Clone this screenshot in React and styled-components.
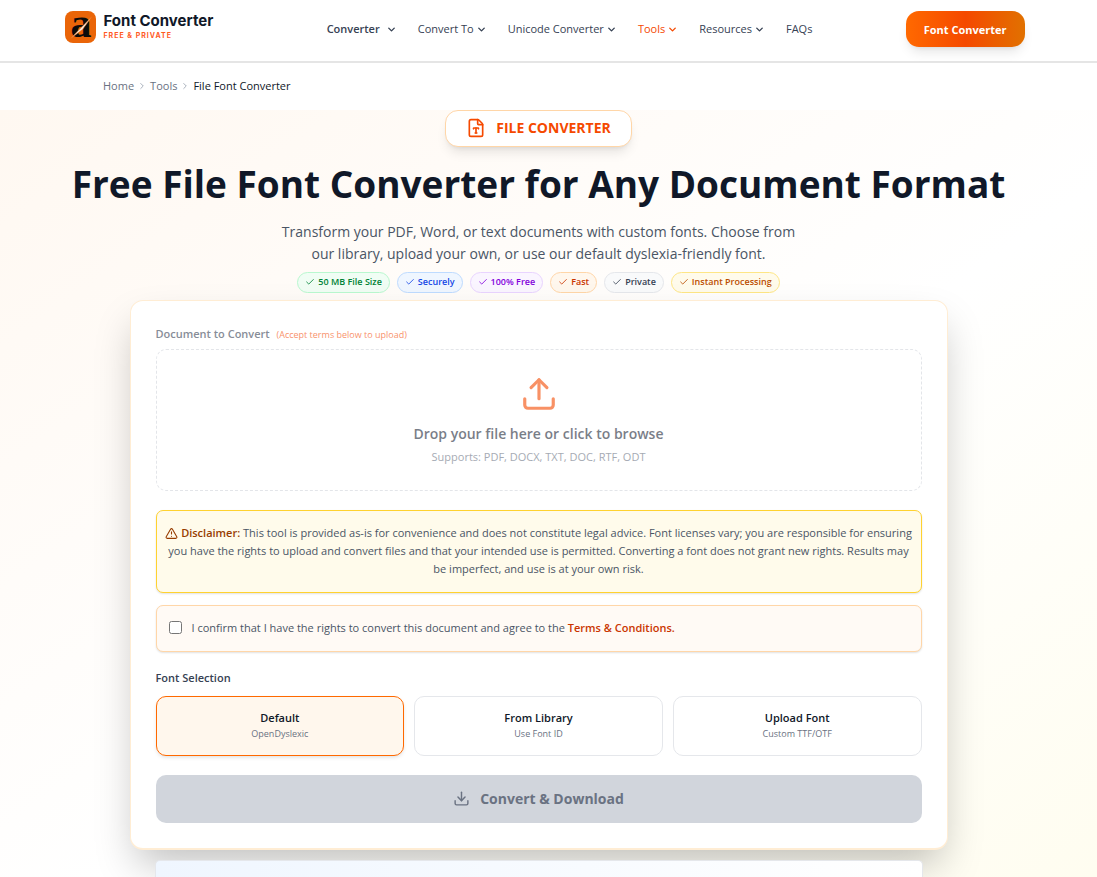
import React, { useState } from 'react'
import styled, { createGlobalStyle, css } from 'styled-components'
import { Check, ChevronDown, ChevronRight, Download, FileType, TriangleAlert, Upload } from 'lucide-react'


const GlobalStyle = createGlobalStyle`
    * {
        box-sizing: border-box;
    }
    body {
        margin: 0;
        background: #ffffff;
        color: #101828;
        font-family: "Open Sans", "Noto Sans", sans-serif;
        font-size: 11px;
        line-height: 16px;
    }
    button, input {
        font-family: inherit;
    }
    a {
        text-decoration: none;
    }
`
const Page = styled.div`
    min-height: 100vh;
    display: flex;
    flex-direction: column;
`

const Header = styled.header`
    padding-right: 8px;
    border-bottom: 2px solid #e5e5e5;
    background: #ffffff;
`
const HeaderInner = styled.div`
    max-width: 960px;
    height: 61px;
    margin: 0 auto;
    padding-bottom: 3px;
    display: flex;
    align-items: center;
    justify-content: space-between;
`
const Brand = styled.a`
    padding-bottom: 4px;
    display: flex;
    align-items: center;
    gap: 8px;
    font-family: Inter, sans-serif;
    color: #101828;
`
const BrandName = styled.div`
    font-size: 15px;
    font-weight: 700;
    line-height: 17px;
`
const BrandTag = styled.div`
    font-size: 7px;
    font-weight: 700;
    line-height: 14px;
    letter-spacing: 1px;
    color: #ff5a1f;
`
const Nav = styled.nav`
    margin-left: 20px;
    display: flex;
    align-items: center;
    gap: 21px;
`
const NavLink = styled.a`
    display: flex;
    align-items: center;
    gap: ${({ $strong }) => ($strong ? 6 : 2)}px;
    font-size: 11px;
    font-weight: ${({ $strong }) => ($strong ? 600 : 400)};
    color: ${({ $active }) => ($active ? '#f54900' : '#364153')};
`
const HeaderButton = styled.button`
    height: 36px;
    padding: 0 18px;
    border: none;
    border-radius: 13px;
    background: linear-gradient(to right, #ff6900, #f54900 50%, #e17100);
    box-shadow: 0 8px 12px -3px rgba(0,0,0,.1), 0 3px 5px -3px rgba(0,0,0,.1);
    color: #ffffff;
    font-size: 11px;
    font-weight: 700;
    cursor: pointer;
`

const Breadcrumb = styled.nav`
    height: 47px;
    padding: 0 103px 2px;
    display: flex;
    align-items: center;
    gap: 3px;
    color: #99a1af;
`
const Crumb = styled.a`
    color: #6a7282;
`
const CurrentCrumb = styled.span`
    color: #101828;
`

const Hero = styled.main`
    flex: 1;
    padding-right: 20px;
    display: flex;
    flex-direction: column;
    align-items: center;
    background: linear-gradient(to bottom right, #fff8f1, #ffffff 55%, #fffdf0);
`
const Badge = styled.div`
    height: 37px;
    padding: 0 20px 1px;
    display: flex;
    align-items: center;
    gap: 10px;
    border: 1px solid #ffd6a8;
    border-radius: 13px;
    background: #ffffff;
    box-shadow: 0 8px 12px -3px rgba(0,0,0,.1), 0 3px 5px -3px rgba(0,0,0,.1);
    color: #f54900;
    font-size: 14px;
    font-weight: 700;
`
const Title = styled.h1`
    margin: 12px 0;
    font-size: 37px;
    font-weight: 700;
    line-height: 50px;
    text-align: center;
`
const Lead = styled.p`
    max-width: 530px;
    margin: 0;
    color: #4a5565;
    font-size: 14px;
    line-height: 22px;
    text-align: center;
`
const Pills = styled.ul`
    margin: 7px 0;
    padding: 0;
    display: flex;
    flex-wrap: wrap;
    justify-content: center;
    gap: 7px;
    list-style: none;
`
const Pill = styled.li`
    height: 21px;
    padding: 0 7px 1px;
    display: flex;
    align-items: center;
    gap: 3px;
    border: 1px solid ${({ $tone }) => $tone.border};
    border-radius: 11px;
    background: ${({ $tone }) => $tone.fill};
    color: ${({ $tone }) => $tone.text};
    font-size: 9px;
    font-weight: 600;
`

const Card = styled.form`
    width: 100%;
    max-width: 818px;
    padding: 25px;
    border: 1px solid #ffedd4;
    border-bottom-width: 2px;
    border-radius: 13px;
    background: #ffffff;
    box-shadow: 0 20px 40px -7px rgba(0,0,0,.25);
`
const Dimmed = styled.div`
    opacity: 0.6;
`
const FieldLabel = styled.div`
    margin-bottom: 6px;
    font-size: 11px;
    font-weight: 600;
    color: #364153;
`
const Hint = styled.span`
    margin-left: 4px;
    font-size: 9px;
    font-weight: 400;
    color: #f54900;
`
const DropZone = styled.label`
    height: 142px;
    display: flex;
    flex-direction: column;
    align-items: center;
    justify-content: center;
    border: 1px dashed #d1d5dc;
    border-radius: 10px;
    svg {
        color: #f54900;
        margin-bottom: 10px;
    }
`
const HiddenFile = styled.input`
    width: 1px;
    height: 1px;
    position: absolute;
    opacity: 0;
`
const DropTitle = styled.span`
    font-size: 14px;
    font-weight: 600;
    line-height: 22px;
    color: #1e2939;
`
const DropNote = styled.span`
    margin-top: 4px;
    color: #6a7282;
`
const Notice = styled.p`
    margin: 19px 0 12px;
    padding: 13px 6px 14px;
    border: 1px solid #ffd230;
    border-radius: 7px;
    background: #fffbeb;
    box-shadow: 0 1px 2px rgba(0,0,0,.12);
    color: #4a5565;
    line-height: 18px;
    text-align: center;
    svg {
        margin-right: 3px;
        vertical-align: -3px;
        color: #973c00;
    }
    strong {
        font-weight: 600;
        color: #973c00;
    }
`
const Consent = styled.label`
    height: 47px;
    padding: 0 12px 2px;
    display: flex;
    align-items: center;
    gap: 10px;
    border: 1px solid #ffd6a8;
    border-radius: 7px;
    background: #fffaf5;
    box-shadow: 0 1px 2px rgba(0,0,0,.12);
    color: #4a5565;
    input {
        width: 13px;
        height: 13px;
        margin: 0;
    }
    a {
        font-weight: 600;
        color: #ca3500;
    }
`
const Fieldset = styled.fieldset`
    margin: 18px 0 19px;
    padding: 0;
    border: none;
`
const Legend = styled.legend`
    margin-bottom: 10px;
    padding: 0;
    font-weight: 600;
    color: #364153;
`
const Options = styled.div`
    display: grid;
    grid-template-columns: repeat(3, 1fr);
    gap: 10px;
`
const Option = styled.button`
    height: 60px;
    display: flex;
    flex-direction: column;
    align-items: center;
    justify-content: center;
    border: 1px solid #e5e7eb;
    border-radius: 10px;
    background: #ffffff;
    color: #101828;
    font-size: 11px;
    font-weight: 600;
    line-height: 16px;
    cursor: pointer;
    ${({ $selected }) => $selected && css`
        border-color: #ff6900;
        background: #fff7ed;
        box-shadow: 0 2px 4px -1px rgba(0,0,0,.15);
    `}
    span {
        font-size: 9px;
        font-weight: 400;
        color: #6a7282;
    }
`
const Submit = styled.button`
    width: 100%;
    height: 48px;
    padding: 0 0 2px;
    display: flex;
    align-items: center;
    justify-content: center;
    gap: 10px;
    border: none;
    border-radius: 10px;
    background: #d1d5dc;
    color: #6a7282;
    font-size: 14px;
    font-weight: 700;
`
const NextPanel = styled.section`
    flex: 1;
    width: 100%;
    max-width: 768px;
    margin-top: 10px;
    border: 1px solid #e5e7eb;
    border-bottom: none;
    border-radius: 5px 5px 0 0;
    background: linear-gradient(to right, #eff6ff, #ffffff);
`
const LogoMark = styled.svg`
    overflow: visible;
    font-family: "Liberation Serif", serif;
    font-size: 42px;
    font-weight: 700;
    line-height: 1;
`

const links = [
    { label: 'Converter', menu: true, strong: true },
    { label: 'Convert To', menu: true },
    { label: 'Unicode Converter', menu: true },
    { label: 'Tools', menu: true, active: true },
    { label: 'Resources', menu: true },
    { label: 'FAQs' },
]

const pills = [
    { label: '50 MB File Size', tone: { fill: '#f0fdf4', border: '#b9f8cf', text: '#008236' } },
    { label: 'Securely', tone: { fill: '#eff6ff', border: '#bedbff', text: '#1447e6' } },
    { label: '100% Free', tone: { fill: '#faf5ff', border: '#e9d4ff', text: '#8200db' } },
    { label: 'Fast', tone: { fill: '#fff7ed', border: '#ffd6a8', text: '#ca3500' } },
    { label: 'Private', tone: { fill: '#f9fafb', border: '#e5e7eb', text: '#364153' } },
    { label: 'Instant Processing', tone: { fill: '#fffbeb', border: '#fee685', text: '#bb4d00' } },
]

const fonts = [
    { id: 'default', label: 'Default', note: 'OpenDyslexic' },
    { id: 'library', label: 'From Library', note: 'Use Font ID' },
    { id: 'upload', label: 'Upload Font', note: 'Custom TTF/OTF' },
]

const Logo = () => (
    <LogoMark width="31" height="32" viewBox="0 0 31 32" aria-hidden="true">
        <rect width="31" height="32" rx="8" fill="#ea6508" />
        <text x="16" y="26" textAnchor="middle" fill="#0b0b0b">a</text>
        <path d="M5 28 L27 5.500 L17.500 18.500 Z" fill="#f7ede4" stroke="#ea6508" strokeWidth="0.5" />
    </LogoMark>
)

const App = () => {
    const [font, setFont] = useState('default')
    const [agreed, setAgreed] = useState(false)
    return (
        <Page>
            <GlobalStyle />
            <Header>
                <HeaderInner>
                    <Brand href="#">
                        <Logo />
                        <div>
                            <BrandName>Font Converter</BrandName>
                            <BrandTag>FREE &amp; PRIVATE</BrandTag>
                        </div>
                    </Brand>
                    <Nav>
                        {links.map((link) => (
                            <NavLink key={link.label} href="#" $strong={link.strong} $active={link.active}>
                                {link.label}
                                {link.menu && <ChevronDown size={11} strokeWidth={3} />}
                            </NavLink>
                        ))}
                    </Nav>
                    <HeaderButton type="button">Font Converter</HeaderButton>
                </HeaderInner>
            </Header>
            <Breadcrumb aria-label="Breadcrumb">
                <Crumb href="#">Home</Crumb>
                <ChevronRight size={10} />
                <Crumb href="#">Tools</Crumb>
                <ChevronRight size={10} />
                <CurrentCrumb>File Font Converter</CurrentCrumb>
            </Breadcrumb>
            <Hero>
                <Badge>
                    <FileType size={20} />
                    FILE CONVERTER
                </Badge>
                <Title>Free File Font Converter for Any Document Format</Title>
                <Lead>
                    Transform your PDF, Word, or text documents with custom fonts. Choose from
                    our library, upload your own, or use our default dyslexia-friendly font.
                </Lead>
                <Pills>
                    {pills.map((pill) => (
                        <Pill key={pill.label} $tone={pill.tone}>
                            <Check size={10} strokeWidth={2} />
                            {pill.label}
                        </Pill>
                    ))}
                </Pills>
                <Card onSubmit={(e) => e.preventDefault()}>
                    <Dimmed>
                        <FieldLabel>
                            Document to Convert <Hint>(Accept terms below to upload)</Hint>
                        </FieldLabel>
                        <DropZone>
                            <HiddenFile type="file" disabled={!agreed} />
                            <Upload size={38} />
                            <DropTitle>Drop your file here or click to browse</DropTitle>
                            <DropNote>Supports: PDF, DOCX, TXT, DOC, RTF, ODT</DropNote>
                        </DropZone>
                    </Dimmed>
                    <Notice>
                        <TriangleAlert size={13} />
                        <strong>Disclaimer:</strong> This tool is provided as-is for convenience and does not
                        constitute legal advice. Font licenses vary; you are responsible for ensuring you have
                        the rights to upload and convert files and that your intended use is permitted.
                        Converting a font does not grant new rights. Results may be imperfect, and use is at
                        your own risk.
                    </Notice>
                    <Consent>
                        <input type="checkbox" checked={agreed} onChange={(e) => setAgreed(e.target.checked)} />
                        <span>
                            I confirm that I have the rights to convert this document and agree to the{' '}
                            <a href="#">Terms &amp; Conditions.</a>
                        </span>
                    </Consent>
                    <Fieldset>
                        <Legend>Font Selection</Legend>
                        <Options>
                            {fonts.map((item) => (
                                <Option
                                    key={item.id}
                                    type="button"
                                    aria-pressed={font === item.id}
                                    $selected={font === item.id}
                                    onClick={() => setFont(item.id)}
                                >
                                    {item.label}
                                    <span>{item.note}</span>
                                </Option>
                            ))}
                        </Options>
                    </Fieldset>
                    <Submit type="submit" disabled={!agreed}>
                        <Download size={17} />
                        Convert &amp; Download
                    </Submit>
                </Card>
                <NextPanel />
            </Hero>
        </Page>
    )
}

export default App
